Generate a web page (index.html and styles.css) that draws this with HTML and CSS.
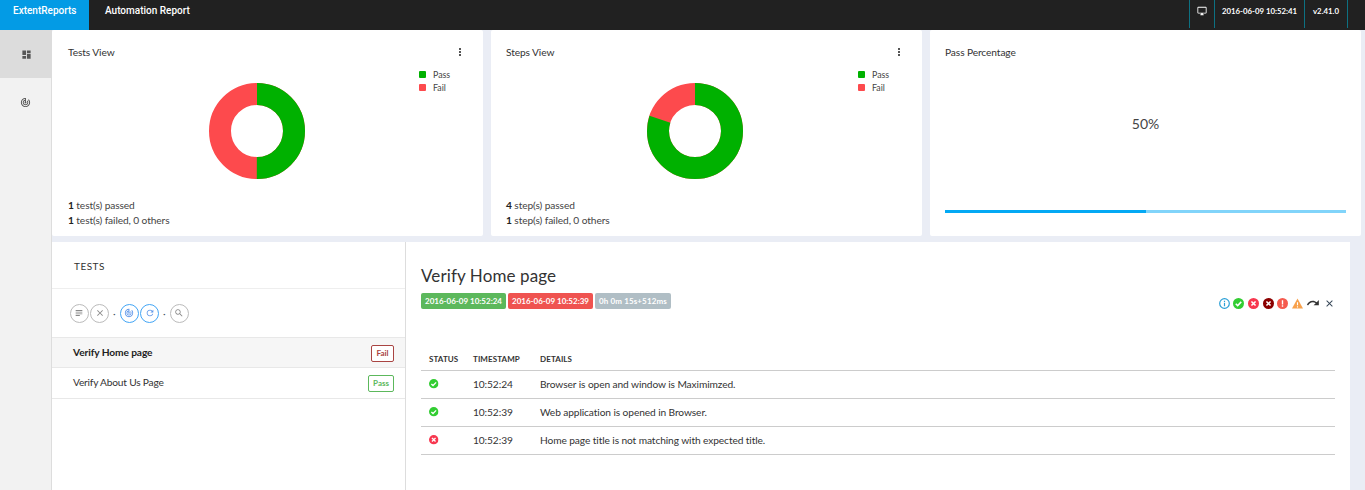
FILE: index.html
```html
<!DOCTYPE html>
<html lang="en">
<head>
<meta charset="utf-8">
<title>ExtentReports</title>
<link rel="stylesheet" href="styles.css">
</head>
<body>
<svg class="defs" aria-hidden="true">
  <symbol id="i-pass" viewBox="0 0 24 24"><circle cx="12" cy="12" r="12" fill="#32cd32"/><path d="M6 12.5l4.2 4L18 8.5" fill="none" stroke="#fff" stroke-width="3.4"/></symbol>
  <symbol id="i-fail" viewBox="0 0 24 24"><circle cx="12" cy="12" r="12" fill="#f7374f"/><path d="M7.5 7.5l9 9M16.5 7.5l-9 9" fill="none" stroke="#fff" stroke-width="3.4"/></symbol>
  <symbol id="i-fatal" viewBox="0 0 24 24"><circle cx="12" cy="12" r="12" fill="#8b0000"/><path d="M7.5 7.5l9 9M16.5 7.5l-9 9" fill="none" stroke="#fff" stroke-width="3.4"/></symbol>
  <symbol id="i-info" viewBox="0 0 24 24"><circle cx="12" cy="12" r="10.5" fill="none" stroke="#2a9fd6" stroke-width="2.6"/><path d="M12 6v2.6M12 10.5V18" stroke="#2a9fd6" stroke-width="2.6"/></symbol>
  <symbol id="i-error" viewBox="0 0 24 24"><circle cx="12" cy="12" r="12" fill="#f55a4e"/><path d="M12 5v9M12 16v3" stroke="#fff" stroke-width="3"/></symbol>
  <symbol id="i-warn" viewBox="0 0 24 24"><path d="M12 1L24 23H0z" fill="#f8a14b"/><path d="M12 9v7M12 18v2.500" stroke="#fff" stroke-width="2.400"/></symbol>
  <symbol id="i-skip" viewBox="0 0 24 24"><path d="M18.400 10.600C16.550 8.990 14.150 8 11.500 8c-4.650 0-8.580 3.030-9.960 7.220L3.900 16c1.050-3.190 4.050-5.500 7.600-5.500 1.950 0 3.730.720 5.120 1.880L13 16h9V7l-3.600 3.600z" fill="#333"/></symbol>
  <symbol id="i-close" viewBox="0 0 24 24"><path d="M19 6.410L17.590 5 12 10.590 6.410 5 5 6.410 10.590 12 5 17.590 6.410 19 12 13.410 17.590 19 19 17.590 13.410 12 19 6.410z"/></symbol>
  <symbol id="i-track" viewBox="0 0 24 24"><path d="M19.070 4.930l-1.410 1.410C19.100 7.790 20 9.790 20 12c0 4.420-3.580 8-8 8s-8-3.580-8-8c0-4.080 3.050-7.440 7-7.930v2.020C8.160 6.570 6 9.030 6 12c0 3.310 2.690 6 6 6s6-2.690 6-6c0-1.660-.670-3.160-1.760-4.240l-1.410 1.410C15.550 9.900 16 10.900 16 12c0 2.210-1.790 4-4 4s-4-1.790-4-4c0-1.860 1.280-3.410 3-3.860v2.140c-.6.350-1 .980-1 1.720 0 1.100.9 2 2 2s2-.9 2-2c0-.740-.4-1.380-1-1.720V2h-1C6.480 2 2 6.480 2 12s4.480 10 10 10 10-4.480 10-10c0-2.760-1.120-5.260-2.930-7.070z"/></symbol>
</svg>

<header class="navbar">
  <div class="brand">ExtentReports</div>
  <div class="report-name">Automation Report</div>
  <div class="nav-right">
    <div class="nav-cell nav-icon"><svg viewBox="0 0 24 24"><path d="M21 2H3c-1.100 0-2 .9-2 2v12c0 1.100.9 2 2 2h7v2H8v2h8v-2h-2v-2h7c1.100 0 2-.9 2-2V4c0-1.100-.9-2-2-2zm0 14H3V4h18v12z"/></svg></div>
    <div class="nav-cell nav-date">2016-06-09 10:52:41</div>
    <div class="nav-cell nav-version">v2.41.0</div>
  </div>
</header>

<div class="shell">
  <nav class="sidenav">
    <div class="side-item active"><svg viewBox="0 0 24 24"><path d="M3 13h8V3H3v10zm0 8h8v-6H3v6zm10 0h8V11h-8v10zm0-18v6h8V3h-8z"/></svg></div>
    <div class="side-item"><svg><use href="#i-track"/></svg></div>
  </nav>

  <main class="content">
    <section class="cards">
      <article class="card">
        <div class="card-head"><span>Tests View</span><span class="more"><i></i><i></i><i></i></span></div>
        <div class="chart-area">
          <svg class="donut" viewBox="0 0 96 96">
            <circle cx="48" cy="48" r="37" class="ring-fail"/>
            <circle cx="48" cy="48" r="37" class="ring-pass half"/>
          </svg>
          <ul class="legend">
            <li><b class="sw-pass"></b>Pass</li>
            <li><b class="sw-fail"></b>Fail</li>
          </ul>
        </div>
        <p class="card-foot"><strong>1</strong> test(s) passed<br><strong>1</strong> test(s) failed, 0 others</p>
      </article>

      <article class="card">
        <div class="card-head"><span>Steps View</span><span class="more"><i></i><i></i><i></i></span></div>
        <div class="chart-area">
          <svg class="donut" viewBox="0 0 96 96">
            <circle cx="48" cy="48" r="37" class="ring-fail"/>
            <circle cx="48" cy="48" r="37" class="ring-pass most"/>
          </svg>
          <ul class="legend">
            <li><b class="sw-pass"></b>Pass</li>
            <li><b class="sw-fail"></b>Fail</li>
          </ul>
        </div>
        <p class="card-foot"><strong>4</strong> step(s) passed<br><strong>1</strong> step(s) failed, 0 others</p>
      </article>

      <article class="card">
        <div class="card-head"><span>Pass Percentage</span></div>
        <div class="percent">50%</div>
        <div class="progress"><div class="progress-fill"></div></div>
      </article>
    </section>

    <section class="tests-panel">
      <aside class="test-list">
        <h2 class="list-title">TESTS</h2>
        <div class="filters">
          <span class="fbtn"><svg viewBox="0 0 24 24"><path d="M14 17H4v2h10v-2zm6-8H4v2h16V9zM4 15h16v-2H4v2zM4 5v2h16V5H4z"/></svg></span>
          <span class="fbtn"><svg><use href="#i-close"/></svg></span>
          <span class="fdot">·</span>
          <span class="fbtn on"><svg><use href="#i-track"/></svg></span>
          <span class="fbtn on"><svg viewBox="0 0 24 24"><path d="M17.650 6.350C16.200 4.900 14.210 4 12 4c-4.420 0-7.990 3.580-7.990 8s3.570 8 7.990 8c3.730 0 6.840-2.550 7.730-6h-2.080c-.82 2.330-3.040 4-5.650 4-3.310 0-6-2.690-6-6s2.690-6 6-6c1.660 0 3.140.69 4.220 1.780L13 11h7V4l-2.350 2.350z"/></svg></span>
          <span class="fdot">·</span>
          <span class="fbtn"><svg viewBox="0 0 24 24"><path d="M15.500 14h-.79l-.28-.27C15.410 12.590 16 11.110 16 9.500 16 5.910 13.090 3 9.500 3S3 5.910 3 9.500 5.910 16 9.500 16c1.610 0 3.090-.59 4.230-1.570l.27.28v.79l5 4.990L20.490 19l-4.990-5zm-6 0C7.010 14 5 11.990 5 9.500S7.010 5 9.500 5 14 7.010 14 9.500 11.990 14 9.500 14z"/></svg></span>
        </div>
        <div class="test-row selected"><span class="test-name">Verify Home page</span><span class="tag tag-fail">Fail</span></div>
        <div class="test-row"><span class="test-name">Verify About Us Page</span><span class="tag tag-pass">Pass</span></div>
      </aside>

      <div class="test-detail">
        <h1 class="detail-title">Verify Home page</h1>
        <div class="meta">
          <div class="labels">
            <span class="label l-green">2016-06-09 10:52:24</span>
            <span class="label l-red">2016-06-09 10:52:39</span>
            <span class="label l-grey">0h 0m 15s+512ms</span>
          </div>
          <div class="status-icons">
            <svg><use href="#i-info"/></svg>
            <svg><use href="#i-pass"/></svg>
            <svg><use href="#i-fail"/></svg>
            <svg><use href="#i-fatal"/></svg>
            <svg><use href="#i-error"/></svg>
            <svg><use href="#i-warn"/></svg>
            <svg class="wide"><use href="#i-skip"/></svg>
            <svg><use href="#i-close"/></svg>
          </div>
        </div>
        <table class="steps">
          <thead><tr><th class="c-status">STATUS</th><th class="c-time">TIMESTAMP</th><th>DETAILS</th></tr></thead>
          <tbody>
            <tr><td><svg class="st"><use href="#i-pass"/></svg></td><td>10:52:24</td><td>Browser is open and window is Maximimzed.</td></tr>
            <tr><td><svg class="st"><use href="#i-pass"/></svg></td><td>10:52:39</td><td>Web application is opened in Browser.</td></tr>
            <tr><td><svg class="st"><use href="#i-fail"/></svg></td><td>10:52:39</td><td>Home page title is not matching with expected title.</td></tr>
          </tbody>
        </table>
      </div>
    </section>
  </main>
</div>
</body>
</html>
```
FILE: styles.css
```css
* { box-sizing: border-box; }
html, body { margin: 0; height: 490px; overflow: hidden; }
body { background: #eaedf5; font-family: "Lato", "Open Sans", sans-serif; font-size: 11px; color: #333; }
.defs { display: none; }

.navbar { display: flex; height: 30px; background: #212121; color: #fff; font-family: "Roboto", sans-serif; font-weight: 500; }
.brand { width: 89px; padding-left: 13px; line-height: 21px; background: #039be5; font-size: 10px; }
.report-name { padding-left: 16px; line-height: 21px; font-size: 10px; }
.nav-right { margin-left: auto; display: flex; height: 28px; margin-right: 17px; }
.nav-cell { border-left: 1px solid #0d7182; line-height: 22px; font-family: "Lato", sans-serif; font-size: 7.800px; font-weight: 700; white-space: nowrap; }
.nav-icon { width: 25px; display: flex; justify-content: center; padding-top: 6px; }
.nav-icon svg { width: 10px; height: 10px; fill: #fff; }
.nav-date { width: 90px; padding-left: 7px; }
.nav-version { width: 44px; padding-left: 8px; border-right: 1px solid #0d7182; }

.shell { display: flex; height: 460px; }
.sidenav { width: 52px; flex: none; background: #f2f2f2; border-right: 1px solid #ddd; }
.side-item { height: 48px; display: flex; align-items: center; justify-content: center; }
.side-item svg { width: 11px; height: 11px; fill: #555; }
.side-item.active { background: #dcdcdc; width: 52px; }

.content { flex: 1; padding-right: 4px; min-width: 0; }
.cards { display: grid; grid-template-columns: repeat(3, 431px); gap: 8px; height: 206px; }
.card { position: relative; display: flex; flex-direction: column; background: #fff; padding: 14px 15px 0; border-radius: 2px; }
.card-head { display: flex; justify-content: space-between; align-items: center; height: 15px; font-size: 10.200px; letter-spacing: -.1px; color: #333; }
.card:first-child .card-head, .card:first-child .card-foot { padding-left: 1px; }
.more { display: flex; flex-direction: column; gap: 1px; margin-right: 7px; }
.more i { width: 2px; height: 2px; background: #555; }
.chart-area { position: relative; display: flex; justify-content: center; padding: 24px 23px 0 0; height: 139px; }
.card:first-child .chart-area { margin-left: -1px; padding-right: 21px; }
.card:first-child .legend { left: 353px; }
.donut { width: 96px; height: 96px; transform: rotate(-90deg); }
.donut circle { fill: none; stroke-width: 22; }
.ring-fail { stroke: #fd4a4d; }
.ring-pass { stroke: #00b100; }
.half { stroke-dasharray: 116.240 232.480; }
.most { stroke-dasharray: 185.980 232.480; }
.legend { position: absolute; left: 352px; top: 9px; margin: 0; padding: 0; list-style: none; font-size: 8.800px; color: #444; }
.legend li { display: flex; align-items: center; height: 13px; }
.legend b { width: 7px; height: 7px; border-radius: 1px; margin-right: 7px; }
.sw-pass { background: #00b100; }
.sw-fail { background: #fd4a4d; }
.card-foot { margin: 0; font-size: 10.200px; letter-spacing: -.1px; line-height: 15px; color: #444; }
.card-foot strong { font-weight: 700; color: #222; }
.percent { flex: 1; text-align: center; font-size: 14px; color: #444; padding-top: 56px; }
.progress { height: 3px; margin: 0 0 23px; background: #81d4fa; }
.progress-fill { width: 50%; height: 100%; background: #03a9f4; }

.tests-panel { display: flex; width: 1298px; height: 248px; margin-top: 6px; background: #fff; }
.test-list { width: 354px; flex: none; border-right: 1px solid #ddd; }
.list-title { margin: 0; height: 47px; padding: 17px 0 0 22px; border-bottom: 1px solid #eee; font-size: 10px; font-weight: 400; line-height: 15px; letter-spacing: .5px; color: #333; }
.filters { display: flex; align-items: center; height: 48px; padding: 0 0 0 17.500px; gap: 1.500px; }
.fbtn { display: flex; align-items: center; justify-content: center; width: 19px; height: 19px; border: 1px solid #bbb; border-radius: 50%; }
.fbtn svg { width: 10px; height: 10px; fill: #888; }
.fbtn.on { border-color: #42a5f5; }
.fbtn.on svg { fill: #5c95e8; }
.fdot { width: 7.500px; text-align: center; color: #456; font-size: 10px; }
.test-row { display: flex; justify-content: space-between; align-items: center; height: 31px; padding: 0 11px 0 21px; border-bottom: 1px solid #e8e8e8; font-size: 10.200px; letter-spacing: -.2px; color: #333; }
.test-name { padding-bottom: 2px; }
.selected { background: #f6f6f6; border-top: 1px solid #e8e8e8; font-weight: 700; color: #222; letter-spacing: -.1px; }
.tag { padding: 0 4px; height: 17px; line-height: 15px; border: 1px solid; border-radius: 2px; font-size: 8px; font-weight: 700; letter-spacing: 0; background: #fff; margin-top: 1px; }
.tag-fail { padding: 0 4.500px; border-color: #a94442; color: #a94442; }
.tag-pass { border-color: #5cb85c; color: #5cb85c; }

.test-detail { flex: 1; padding: 23px 15px 0; min-width: 0; }
.detail-title { margin: 0; height: 28px; font-size: 17px; font-weight: 400; line-height: 21px; color: #333; letter-spacing: .1px; }
.meta { position: relative; height: 51px; }
.labels { display: flex; gap: 2px; }
.label { height: 16px; padding: 0 4px; border-radius: 2px; color: #fff; font-size: 8px; font-weight: 700; line-height: 16px; }
.l-green { background: #5cb85c; }
.l-red { background: #ef5350; }
.l-grey { background: #b0bec5; letter-spacing: .13px; }
.status-icons { position: absolute; right: 0; top: 3px; display: flex; align-items: center; gap: 3.600px; }
.status-icons svg { width: 11px; height: 11px; fill: #345; }
.status-icons .wide { width: 14px; height: 14px; }
.steps { width: 914px; border-collapse: collapse; font-size: 10.200px; letter-spacing: -.1px; color: #333; }
.steps th { height: 26px; padding: 5px 0 0 8px; text-align: left; font-size: 8px; font-weight: 700; letter-spacing: .1px; border-bottom: 1px solid #ccc; }
.steps td { height: 28px; padding: 0 0 0 8px; border-bottom: 1px solid #ccc; }
.c-status { width: 44px; }
.c-time { width: 67px; }
.steps td svg.st { display: block; width: 9.500px; height: 9.500px; }
```
